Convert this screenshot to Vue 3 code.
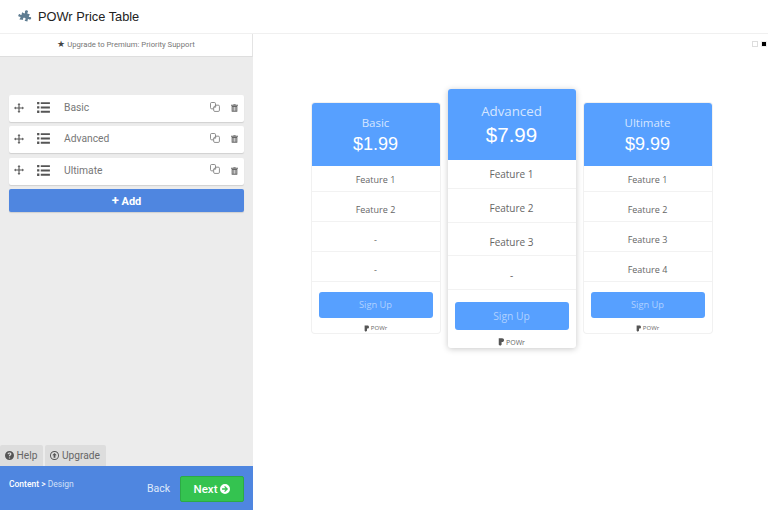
<template>
  <div class="page">
    <header class="topbar">
      <svg class="puzzle" viewBox="0 0 16 16">
        <path d="M6.200 1.600c1-.9 2.600-.3 2.600 1 0 .6-.3.9-.3 1.300 0 .4.400.6 1 .5l2-.3-.2 2c-.1.700.2 1 .6 1 .5 0 .7-.4 1.300-.4 1.200 0 1.700 1.700.7 2.600-.7.600-1.400.2-2 .1-.4 0-.6.300-.5.800l.3 2-2.200.4c-.6.100-.9-.2-.9-.6 0-.5.500-.8.500-1.400 0-1.200-2.700-1.300-2.800 0 0 .6.400 1 .4 1.400 0 .4-.3.700-.9.600L3 13.300l.3-2.300c.1-.5-.2-.8-.6-.8-.5 0-.9.500-1.500.4C.1 10.300.1 7.800 1.300 7.700c.6 0 .9.500 1.400.5.400 0 .7-.3.600-.9L3 5l2.300.3c.6.100.9-.2.900-.6 0-.5-.6-1-.6-1.500 0-.6.200-1.100.6-1.600z" />
      </svg>
      <span class="title">POWr Price Table</span>
    </header>

    <div class="main">
      <aside class="sidebar">
        <div class="banner"><span class="star">★</span> Upgrade to Premium: Priority Support</div>

        <div class="list">
          <div v-for="plan in plans" :key="plan.name" class="row">
            <svg class="ic move" viewBox="0 0 16 16">
              <path d="M8 0l2.400 2.800H8.900v4.300h4.300V5.600L16 8l-2.800 2.400V8.900H8.900v4.300h1.500L8 16l-2.400-2.800h1.500V8.900H2.800v1.500L0 8l2.800-2.400v1.500h4.300V2.800H5.600z" />
            </svg>
            <svg class="ic lines" viewBox="0 0 14 12">
              <path d="M0 0h2.500v2.500H0zM4 .2h10v2.100H4zM0 4.700h2.500v2.500H0zM4 4.900h10V7H4zM0 9.400h2.500v2.500H0zM4 9.600h10v2.100H4z" />
            </svg>
            <span class="row-name">{{ plan.name }}</span>
            <svg class="copy" viewBox="0 0 12 12">
              <path d="M4 8.200H2a1.400 1.400 0 0 1-1.400-1.400V2A1.400 1.400 0 0 1 2 .6h3.200a1.400 1.400 0 0 1 1.400 1.400v1.800" />
              <path d="M6.800 3.800h3.100a1.400 1.400 0 0 1 1.400 1.400v4.700a1.400 1.400 0 0 1-1.400 1.400H5.800a1.400 1.400 0 0 1-1.400-1.400V6.200zM6.800 3.800v2.400H4.400" />
            </svg>
            <svg class="ic trash" viewBox="0 0 11 12">
              <path d="M3.500 1l.5-1h3l.5 1H11v1.300H0V1zM1 3h9v8a1 1 0 0 1-1 1H2a1 1 0 0 1-1-1zm1.700 1.500v6h1v-6zm2.300 0v6h1v-6zm2.300 0v6h1v-6z" fill-rule="evenodd" />
            </svg>
          </div>
          <button type="button" class="add"><span class="plus">+</span> Add</button>
        </div>

        <div class="tabs">
          <div class="tab">
            <svg class="tab-ic" viewBox="0 0 12 12">
              <path fill-rule="evenodd" d="M6 0a6 6 0 1 1 0 12A6 6 0 0 1 6 0zM5.200 8.600v1.500h1.600V8.600zM6 2C4.600 2 3.600 2.700 3.400 4l1.400.4c.1-.6.500-1 1.100-1 .6 0 1 .300 1 .700 0 .4-.3.600-.8.900-.6.400-.9.800-.9 1.500v.5h1.600v-.3c0-.3.200-.5.700-.800.600-.400 1.100-.9 1.100-1.800C8.600 2.900 7.500 2 6 2z" />
            </svg>
            Help
          </div>
          <div class="tab">
            <svg class="tab-ic" viewBox="0 0 12 12">
              <path fill-rule="evenodd" d="M6 0a6 6 0 1 1 0 12A6 6 0 0 1 6 0zm0 1.300a4.700 4.700 0 1 0 0 9.400 4.700 4.700 0 0 0 0-9.400zM6 2.500l3 3H7.200V9H4.800V5.500H3z" />
            </svg>
            Upgrade
          </div>
        </div>

        <footer class="footer">
          <div class="crumbs"><b>Content &gt;</b> <span>Design</span></div>
          <span class="back">Back</span>
          <button type="button" class="next">
            Next
            <svg class="next-ic" viewBox="0 0 12 12">
              <path fill-rule="evenodd" d="M6 0a6 6 0 1 1 0 12A6 6 0 0 1 6 0zm0 2.300L5 3.300l1.700 1.800H2.500v1.800h4.200L5 8.700l1 1L9.700 6z" />
            </svg>
          </button>
        </footer>
      </aside>

      <section class="canvas">
        <div class="swatches">
          <span class="swatch"></span>
          <span class="swatch dark"></span>
        </div>
        <div class="cards">
          <div v-for="plan in plans" :key="plan.name" class="card" :class="{ featured: plan.featured }">
            <div class="card-head">
              <div class="plan-name">{{ plan.name }}</div>
              <div class="plan-price">{{ plan.price }}</div>
            </div>
            <div v-for="(f, i) in plan.features" :key="i" class="feature">{{ f }}</div>
            <div class="card-foot">
              <div class="signup">Sign Up</div>
              <div class="brand">
                <svg class="brand-ic" viewBox="0 0 8 10">
                  <path d="M1 0h4.500C7 0 8 1 8 2.500S7 5 5.500 5H4.800v3.500L2.800 10 1 8.500z" />
                </svg>
                POWr
              </div>
            </div>
          </div>
        </div>
      </section>
    </div>
  </div>
</template>

<script setup>
// Les trois offres affichées dans la liste et dans l'aperçu
const plans = [
  { name: 'Basic', price: '$1.99', features: ['Feature 1', 'Feature 2', '-', '-'] },
  { name: 'Advanced', price: '$7.99', featured: true, features: ['Feature 1', 'Feature 2', 'Feature 3', '-'] },
  { name: 'Ultimate', price: '$9.99', features: ['Feature 1', 'Feature 2', 'Feature 3', 'Feature 4'] }
];
</script>

<style>
html,
body {
  margin: 0;
  background: #fff;
}
</style>

<style scoped>
.page {
  width: 768px;
  height: 510px;
  display: flex;
  flex-direction: column;
  overflow: hidden;
  font-family: Roboto, sans-serif;
}

.topbar {
  height: 34px;
  box-sizing: border-box;
  flex: none;
  display: flex;
  align-items: center;
  padding-left: 18px;
  gap: 5px;
  border-bottom: 1px solid #f0f0f0;
  background: #fff;
}

.puzzle {
  width: 15px;
  height: 15px;
  fill: #5f7d92;
  transform: rotate(20deg);
  margin-top: -1px;
}

.title {
  font-family: "Liberation Sans", sans-serif;
  font-size: 12.8px;
  color: #222;
}

.main {
  flex: 1;
  display: flex;
  min-height: 0;
}

.sidebar {
  width: 253px;
  flex: none;
  display: flex;
  flex-direction: column;
  background: #ececec;
}

.banner {
  height: 23px;
  line-height: 21px;
  background: #fff;
  border-bottom: 1px solid #dedede;
  border-right: 1px solid #e4e4e4;
  text-align: center;
  font-size: 7.7px;
  color: #777;
  box-sizing: border-box;
}

.star {
  color: #444;
  font-size: 9px;
}

.list {
  margin-top: 38px;
  padding: 0 9px;
  display: flex;
  flex-direction: column;
  gap: 4.300px;
}

.row {
  height: 27px;
  box-sizing: border-box;
  display: flex;
  align-items: center;
  background: #fff;
  border-radius: 2px;
  box-shadow: 0 1px 1px rgba(0, 0, 0, 0.12);
  padding: 0 6px 2px 5px;
}

.ic {
  fill: #555;
  flex: none;
}

.move {
  width: 10px;
  height: 10px;
}

.lines {
  width: 13px;
  height: 11px;
  margin-left: 13px;
}

.row-name {
  flex: 1;
  margin-left: 14px;
  font-size: 10.3px;
  color: #777;
}

.copy {
  width: 10px;
  height: 10px;
  flex: none;
  fill: none;
  stroke: #777;
  stroke-width: 1;
  margin-top: -2px;
}

.trash {
  width: 7px;
  height: 8px;
  margin-left: 11px;
  margin-top: 1px;
  fill: #666;
}

.add {
  height: 23px;
  border: none;
  border-radius: 2px;
  background: #4f86e0;
  color: #fff;
  font-family: Roboto, sans-serif;
  font-size: 11px;
  font-weight: 700;
  padding: 0;
  box-shadow: 0 1px 1px rgba(0, 0, 0, 0.12);
}

.plus {
  font-size: 13px;
}

.tabs {
  margin-top: auto;
  display: flex;
  gap: 2px;
}

.tab {
  height: 21px;
  padding: 0 6px 0 5px;
  display: flex;
  align-items: center;
  gap: 2.500px;
  background: #ddd;
  border-radius: 2px 2px 0 0;
  font-size: 10.2px;
  color: #666;
}

.tab-ic {
  width: 9px;
  height: 9px;
  fill: #555;
}

.footer {
  height: 44px;
  flex: none;
  display: flex;
  align-items: flex-start;
  padding: 10px 9px 0;
  box-sizing: border-box;
  background: #4f86e0;
  color: #fff;
}

.crumbs {
  flex: 1;
  font-size: 8.500px;
  line-height: 17px;
  color: #cfe0f8;
}

.crumbs b {
  color: #fff;
  font-weight: 500;
}

.back {
  font-size: 10.5px;
  line-height: 26px;
  color: #dfe9fa;
  margin-right: 10px;
}

.next {
  width: 64px;
  height: 26px;
  padding: 0;
  border: 1px solid #2caa45;
  border-radius: 2px;
  background: #34c350;
  color: #fff;
  font-family: Roboto, sans-serif;
  font-size: 11.5px;
  font-weight: 500;
  display: flex;
  align-items: center;
  justify-content: center;
  gap: 3px;
}

.next-ic {
  width: 10px;
  height: 10px;
  fill: #fff;
}

.canvas {
  flex: 1;
  position: relative;
  background: #fff;
}

.swatches {
  position: absolute;
  top: 7px;
  right: 1px;
  display: flex;
  gap: 3px;
}

.swatch {
  width: 4px;
  height: 4px;
  border: 1px solid #ddd;
}

.swatch.dark {
  background: #000;
  border-color: #eee;
}

.cards {
  display: flex;
  align-items: flex-start;
  justify-content: center;
  gap: 8px;
  padding: 55px 0 0 2px;
}

.card {
  width: 128px;
  margin-top: 14px;
  background: #fff;
  border-radius: 3px;
  box-shadow: 0 0 0 1px #f1f1f1;
  font-family: "Open Sans", sans-serif;
  text-align: center;
}

.card-head {
  height: 63px;
  box-sizing: border-box;
  padding-top: 12px;
  background: #57a0ff;
  border-radius: 3px 3px 0 0;
  color: #fff;
}

.plan-name {
  font-size: 11.500px;
  line-height: 16px;
  color: #d5e6ff;
}

.plan-price {
  font-family: "Liberation Sans", sans-serif;
  font-size: 18px;
  line-height: 27px;
}

.feature {
  height: 30px;
  padding-top: 5px;
  line-height: 26px;
  box-sizing: border-box;
  border-bottom: 1px solid #f2f2f2;
  font-size: 9px;
  color: #666;
}

.card-head + .feature {
  height: 26px;
  padding-top: 1px;
  line-height: 25px;
}

.card-foot {
  box-sizing: border-box;
  padding: 10px 7px 0;
  height: 51px;
}

.signup {
  height: 26px;
  line-height: 26px;
  border-radius: 3px;
  background: #57a0ff;
  color: #b0d1ff;
  font-size: 9.300px;
}

.brand {
  margin-top: 4px;
  height: 12px;
  display: flex;
  align-items: center;
  justify-content: center;
  gap: 2px;
  font-size: 6px;
  color: #666;
}

.brand-ic {
  width: 5px;
  height: 7px;
  fill: #555;
}

.featured {
  margin-top: 0;
  box-shadow: 0 1px 6px rgba(0, 0, 0, 0.22);
}

.featured .card-head {
  height: 71px;
  padding-top: 13px;
}

.featured .plan-name {
  font-size: 13.300px;
  line-height: 18px;
}

.featured .plan-price {
  font-size: 20.5px;
  line-height: 29px;
}

.featured .feature {
  height: 33.700px;
  padding-top: 5px;
  line-height: 28px;
  font-size: 10px;
}

.featured .card-head + .feature {
  height: 29px;
  padding-top: 0;
}

.featured .card-foot {
  padding-top: 12px;
  height: 58px;
}

.featured .signup {
  height: 28px;
  line-height: 28px;
  font-size: 10.300px;
}

.featured .brand {
  margin-top: 6px;
  font-size: 7px;
}

.featured .brand-ic {
  width: 6px;
  height: 8px;
}
</style>
